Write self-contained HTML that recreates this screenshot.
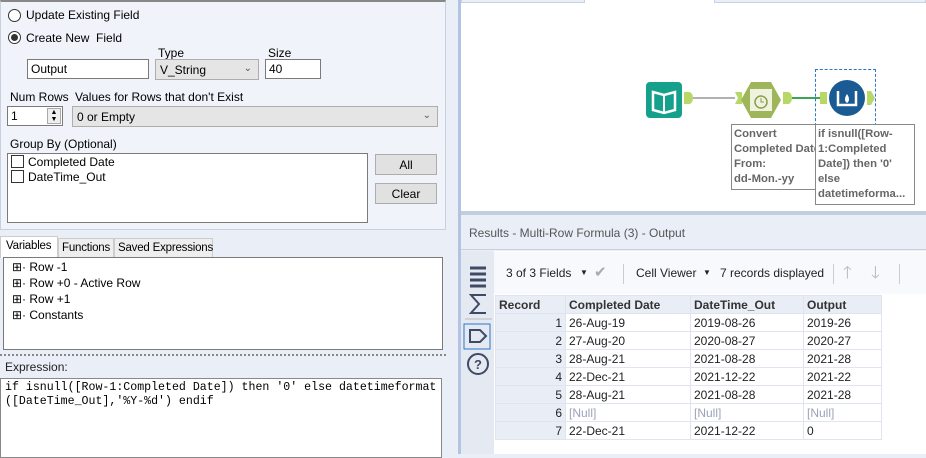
<!DOCTYPE html>
<html><head><style>
*{box-sizing:border-box;margin:0;padding:0}
body{width:926px;height:454px;overflow:hidden;background:#e9eef7;font-family:"Liberation Sans",sans-serif;font-size:12px;color:#000;position:relative}
.a{position:absolute}
.inp{position:absolute;background:#fff;border:1px solid #7a7a7a;font-size:12px;padding:2px 3px;line-height:14px}
.sel{position:absolute;background:#e5e5e5;border:1px solid #adadad;font-size:12px;padding:3px 4px;line-height:14px}
.btn{position:absolute;background:#e1e1e1;border:1px solid #adadad;text-align:center;font-size:12px;line-height:20px}
.cb{display:inline-block;width:13px;height:13px;border:1px solid #333;background:#fff;vertical-align:-2px;margin-right:4px}
.rad{position:absolute;width:13px;height:13px;border:1px solid #333;border-radius:50%;background:#fff}
table{border-collapse:collapse;font-family:"Liberation Sans",sans-serif;font-size:12px}
td{border:1px solid #dfe4ee;height:18px;padding:0 3px;color:#222;background:#fff}
tr.h td{background:#e9edf5;font-weight:bold;color:#333}
td.r{text-align:right;background:#e9edf5}
.nul{color:#9aa3b5}
.tl{font-family:"Liberation Sans",sans-serif;font-size:11.3px;font-weight:bold;color:#666;line-height:15px;white-space:nowrap;overflow:hidden}
.tab{position:absolute;font-size:11.5px;letter-spacing:-0.2px;white-space:nowrap}
</style></head><body>
<div class="a" style="left:0;top:0;width:446px;height:230px;background:#f0f3fa;border:1px solid #c8d0e0;border-top:2px solid #888"></div>
<div class="rad" style="left:8px;top:9px"></div>
<div class="a" style="left:26px;top:8px">Update Existing Field</div>
<div class="rad" style="left:8px;top:31px"><div class="a" style="left:2px;top:2px;width:7px;height:7px;border-radius:50%;background:#333"></div></div>
<div class="a" style="left:26px;top:31px">Create New &nbsp;Field</div>
<div class="a" style="left:158px;top:46px">Type</div>
<div class="a" style="left:268px;top:46px">Size</div>
<div class="inp" style="left:27px;top:59px;width:122px;height:20px">Output</div>
<div class="sel" style="left:155px;top:59px;width:104px;height:21px">V_String<span style="position:absolute;right:6px;top:2px;color:#555;font-size:10px">&#8964;</span></div>
<div class="inp" style="left:265px;top:59px;width:56px;height:20px">40</div>
<div class="a" style="left:10px;top:90px">Num Rows</div>
<div class="a" style="left:75px;top:90px">Values for Rows that don't Exist</div>
<div class="inp" style="left:7px;top:106px;width:56px;height:20px">1<span style="position:absolute;right:1px;top:1px;width:14px;height:16px;background:#eee;border:1px solid #aaa;font-size:7px;line-height:7px;text-align:center">▲<br>▼</span></div>
<div class="sel" style="left:72px;top:106px;width:366px;height:21px">0 or Empty<span style="position:absolute;right:6px;top:2px;color:#555;font-size:10px">&#8964;</span></div>
<div class="a" style="left:10px;top:137px">Group By (Optional)</div>
<div class="a" style="left:7px;top:153px;width:361px;height:70px;background:#fff;border:1px solid #7a7a7a;padding:1px 3px;line-height:15px"><div><span class="cb"></span>Completed Date</div><div><span class="cb"></span>DateTime_Out</div></div>
<div class="btn" style="left:375px;top:154px;width:62px;height:21px">All</div>
<div class="btn" style="left:375px;top:183px;width:62px;height:21px">Clear</div>
<div class="tab" style="left:0;top:236px;width:58px;height:22px;background:#fff;border:1px solid #ccc;border-bottom:none;padding:3px 5px">Variables</div>
<div class="tab" style="left:58px;top:238px;width:56px;height:20px;background:#eee;border:1px solid #ccc;padding:3px 3px">Functions</div>
<div class="tab" style="left:114px;top:238px;width:99px;height:20px;background:#eee;border:1px solid #ccc;padding:3px 3px">Saved Expressions</div>
<div class="a" style="left:3px;top:257px;width:440px;height:93px;background:#fff;border:1px solid #7a7a7a;line-height:16px;padding:1px 8px">
<div>⊞· Row -1</div><div>⊞· Row +0 - Active Row</div><div>⊞· Row +1</div><div>⊞· Constants</div></div>
<div class="a" style="left:0;top:354px;width:446px;height:2px;border-top:2px dotted #888"></div>
<div class="a" style="left:5px;top:360px;color:#222">Expression:</div>
<div class="a" style="left:0;top:378px;width:442px;height:80px;background:#fff;border:1px solid #888;font-family:'Liberation Mono',monospace;font-size:11.6px;line-height:14px;padding:2px 4px;white-space:pre;overflow:hidden">if isnull([Row-1:Completed Date]) then '0' else datetimeformat
([DateTime_Out],'%Y-%d') endif</div>
<div class="a" style="left:458px;top:0;width:3px;height:454px;background:#b3c3e3"></div>
<div class="a" style="left:461px;top:0;width:465px;height:211px;background:#fff"></div>
<div class="a" style="left:461px;top:0;width:124px;height:3px;border:1px solid #c8d2e8;border-top:none;background:#e9eef7"></div>
<div class="a" style="left:714px;top:0;width:212px;height:3px;border:1px solid #c8d2e8;border-top:none;background:#e9eef7"></div>
<svg class="a" style="left:640px;top:80px" width="240" height="50">
<rect x="6" y="2" width="36" height="36" rx="4" fill="#14a08a"/>
<path d="M13 12 L24 15 L35 12 L35 30 L24 33 L13 30 Z" fill="none" stroke="#fff" stroke-width="2.5"/>
<path d="M24 15 V33" stroke="#fff" stroke-width="2"/>
<path d="M44 12 h5 a4 6 0 0 1 0 12 h-5 z" fill="#b7d766"/>
<line x1="53" y1="18" x2="95" y2="18" stroke="#999" stroke-width="1.5"/>
<path d="M95 12 h7 v12 h-7 l3 -6 z" fill="#b7d766"/>
<polygon points="111,2 131,2 141,20 131,38 111,38 101,20" fill="#9eb55a"/>
<rect x="110" y="9" width="22" height="22" fill="#f0f2e0"/>
<circle cx="121" cy="22" r="6" fill="none" stroke="#8a9c48" stroke-width="1.5"/>
<path d="M121 18v4h3" stroke="#8a9c48" fill="none"/>
<path d="M143 12 h5 a4 6 0 0 1 0 12 h-5 z" fill="#b7d766"/>
<line x1="152" y1="18" x2="180" y2="18" stroke="#3aa650" stroke-width="2"/>
<rect x="180" y="12" width="7" height="12" fill="#b7d766"/>
<circle cx="207" cy="18" r="18" fill="#1b5b93"/>
<path d="M198 11 v14 h18 v-14" fill="none" stroke="#fff" stroke-width="2.5"/>
<path d="M207 14 q-4 6 0 9 q4 -3 0 -9z" fill="#fff"/>
<path d="M227 11 h4 l4 7 l-4 7 h-4 z" fill="#b7d766"/>
</svg>
<div class="a" style="left:815px;top:69px;width:61px;height:62px;border:1px dashed #2a78c8"></div>
<div class="a tl" style="left:731px;top:124px;width:86px;height:66px;border:1px solid #888;background:#fff;padding:2px 2px">Convert<br>Completed Date<br>From:<br>dd-Mon.-yy</div>
<div class="a tl" style="left:815px;top:124px;width:100px;height:81px;border:1px solid #888;background:#fff;padding:2px 2px">if isnull([Row-<br>1:Completed<br>Date]) then '0'<br>else<br>datetimeforma...</div>
<div class="a" style="left:461px;top:211px;width:465px;height:4px;background:#c3cde0"></div>
<div class="a" style="left:461px;top:215px;width:465px;height:35px;background:#e9eef7;border-bottom:1px solid #ccd;padding:11px 8px;color:#555">Results - Multi-Row Formula (3) - Output</div>
<div class="a" style="left:461px;top:251px;width:465px;height:203px;background:#fff"></div>
<div class="a" style="left:461px;top:251px;width:33px;height:203px;background:#e5e9f1"></div>
<div class="a" style="left:494px;top:252px;width:432px;height:42px;background:#f7f9fc;color:#222;line-height:42px">
<span class="a" style="left:12px">3 of 3 Fields</span><span class="a" style="left:86px;font-size:8px">▼</span><span class="a" style="left:100px;color:#aaa;font-size:15px">✔</span>
<span class="a" style="left:129px;top:12px;width:1px;height:20px;background:#ccc"></span>
<span class="a" style="left:142px">Cell Viewer</span><span class="a" style="left:209px;font-size:8px">▼</span><span class="a" style="left:226px">7 records displayed</span>
<span class="a" style="left:339px;top:12px;width:1px;height:20px;background:#ccc"></span>
<span class="a" style="left:349px;color:#bbb;font-size:17px">🡑</span><span class="a" style="left:377px;color:#bbb;font-size:17px">🡓</span>
<span class="a" style="left:405px;top:12px;width:1px;height:20px;background:#ccc"></span></div>
<svg class="a" style="left:462px;top:255px" width="32" height="125">
<path d="M8 13h16M8 19h16M8 25h16M8 31h16" stroke="#3f4a66" stroke-width="3" fill="none"/>
<path d="M24 40 H9 l8 9 l-8 9 h15" stroke="#3f4a66" stroke-width="2" fill="none"/>
<line x1="3" y1="64" x2="30" y2="64" stroke="#bbb"/>
<rect x="2" y="69" width="26" height="25" fill="none" stroke="#2a78c8"/>
<path d="M8 75 h10 l6 6 l-6 6 h-10 z" stroke="#3f4a66" stroke-width="2" fill="none"/>
<circle cx="16" cy="109" r="10" stroke="#3f4a66" stroke-width="2" fill="none"/>
<text x="16" y="114" font-size="13" font-weight="bold" text-anchor="middle" fill="#3f4a66" font-family="Liberation Sans">?</text>
</svg>
<table class="a" style="left:495px;top:295px">
<tr class="h"><td style="width:70px">Record</td><td style="width:125px">Completed Date</td><td style="width:113px">DateTime_Out</td><td style="width:78px">Output</td></tr>
<tr><td class="r">1</td><td>26-Aug-19</td><td>2019-08-26</td><td>2019-26</td></tr>
<tr><td class="r">2</td><td>27-Aug-20</td><td>2020-08-27</td><td>2020-27</td></tr>
<tr><td class="r">3</td><td>28-Aug-21</td><td>2021-08-28</td><td>2021-28</td></tr>
<tr><td class="r">4</td><td>22-Dec-21</td><td>2021-12-22</td><td>2021-22</td></tr>
<tr><td class="r">5</td><td>28-Aug-21</td><td>2021-08-28</td><td>2021-28</td></tr>
<tr><td class="r">6</td><td class="nul">[Null]</td><td class="nul">[Null]</td><td class="nul">[Null]</td></tr>
<tr><td class="r">7</td><td>22-Dec-21</td><td>2021-12-22</td><td>0</td></tr>
</table>
</body></html>
